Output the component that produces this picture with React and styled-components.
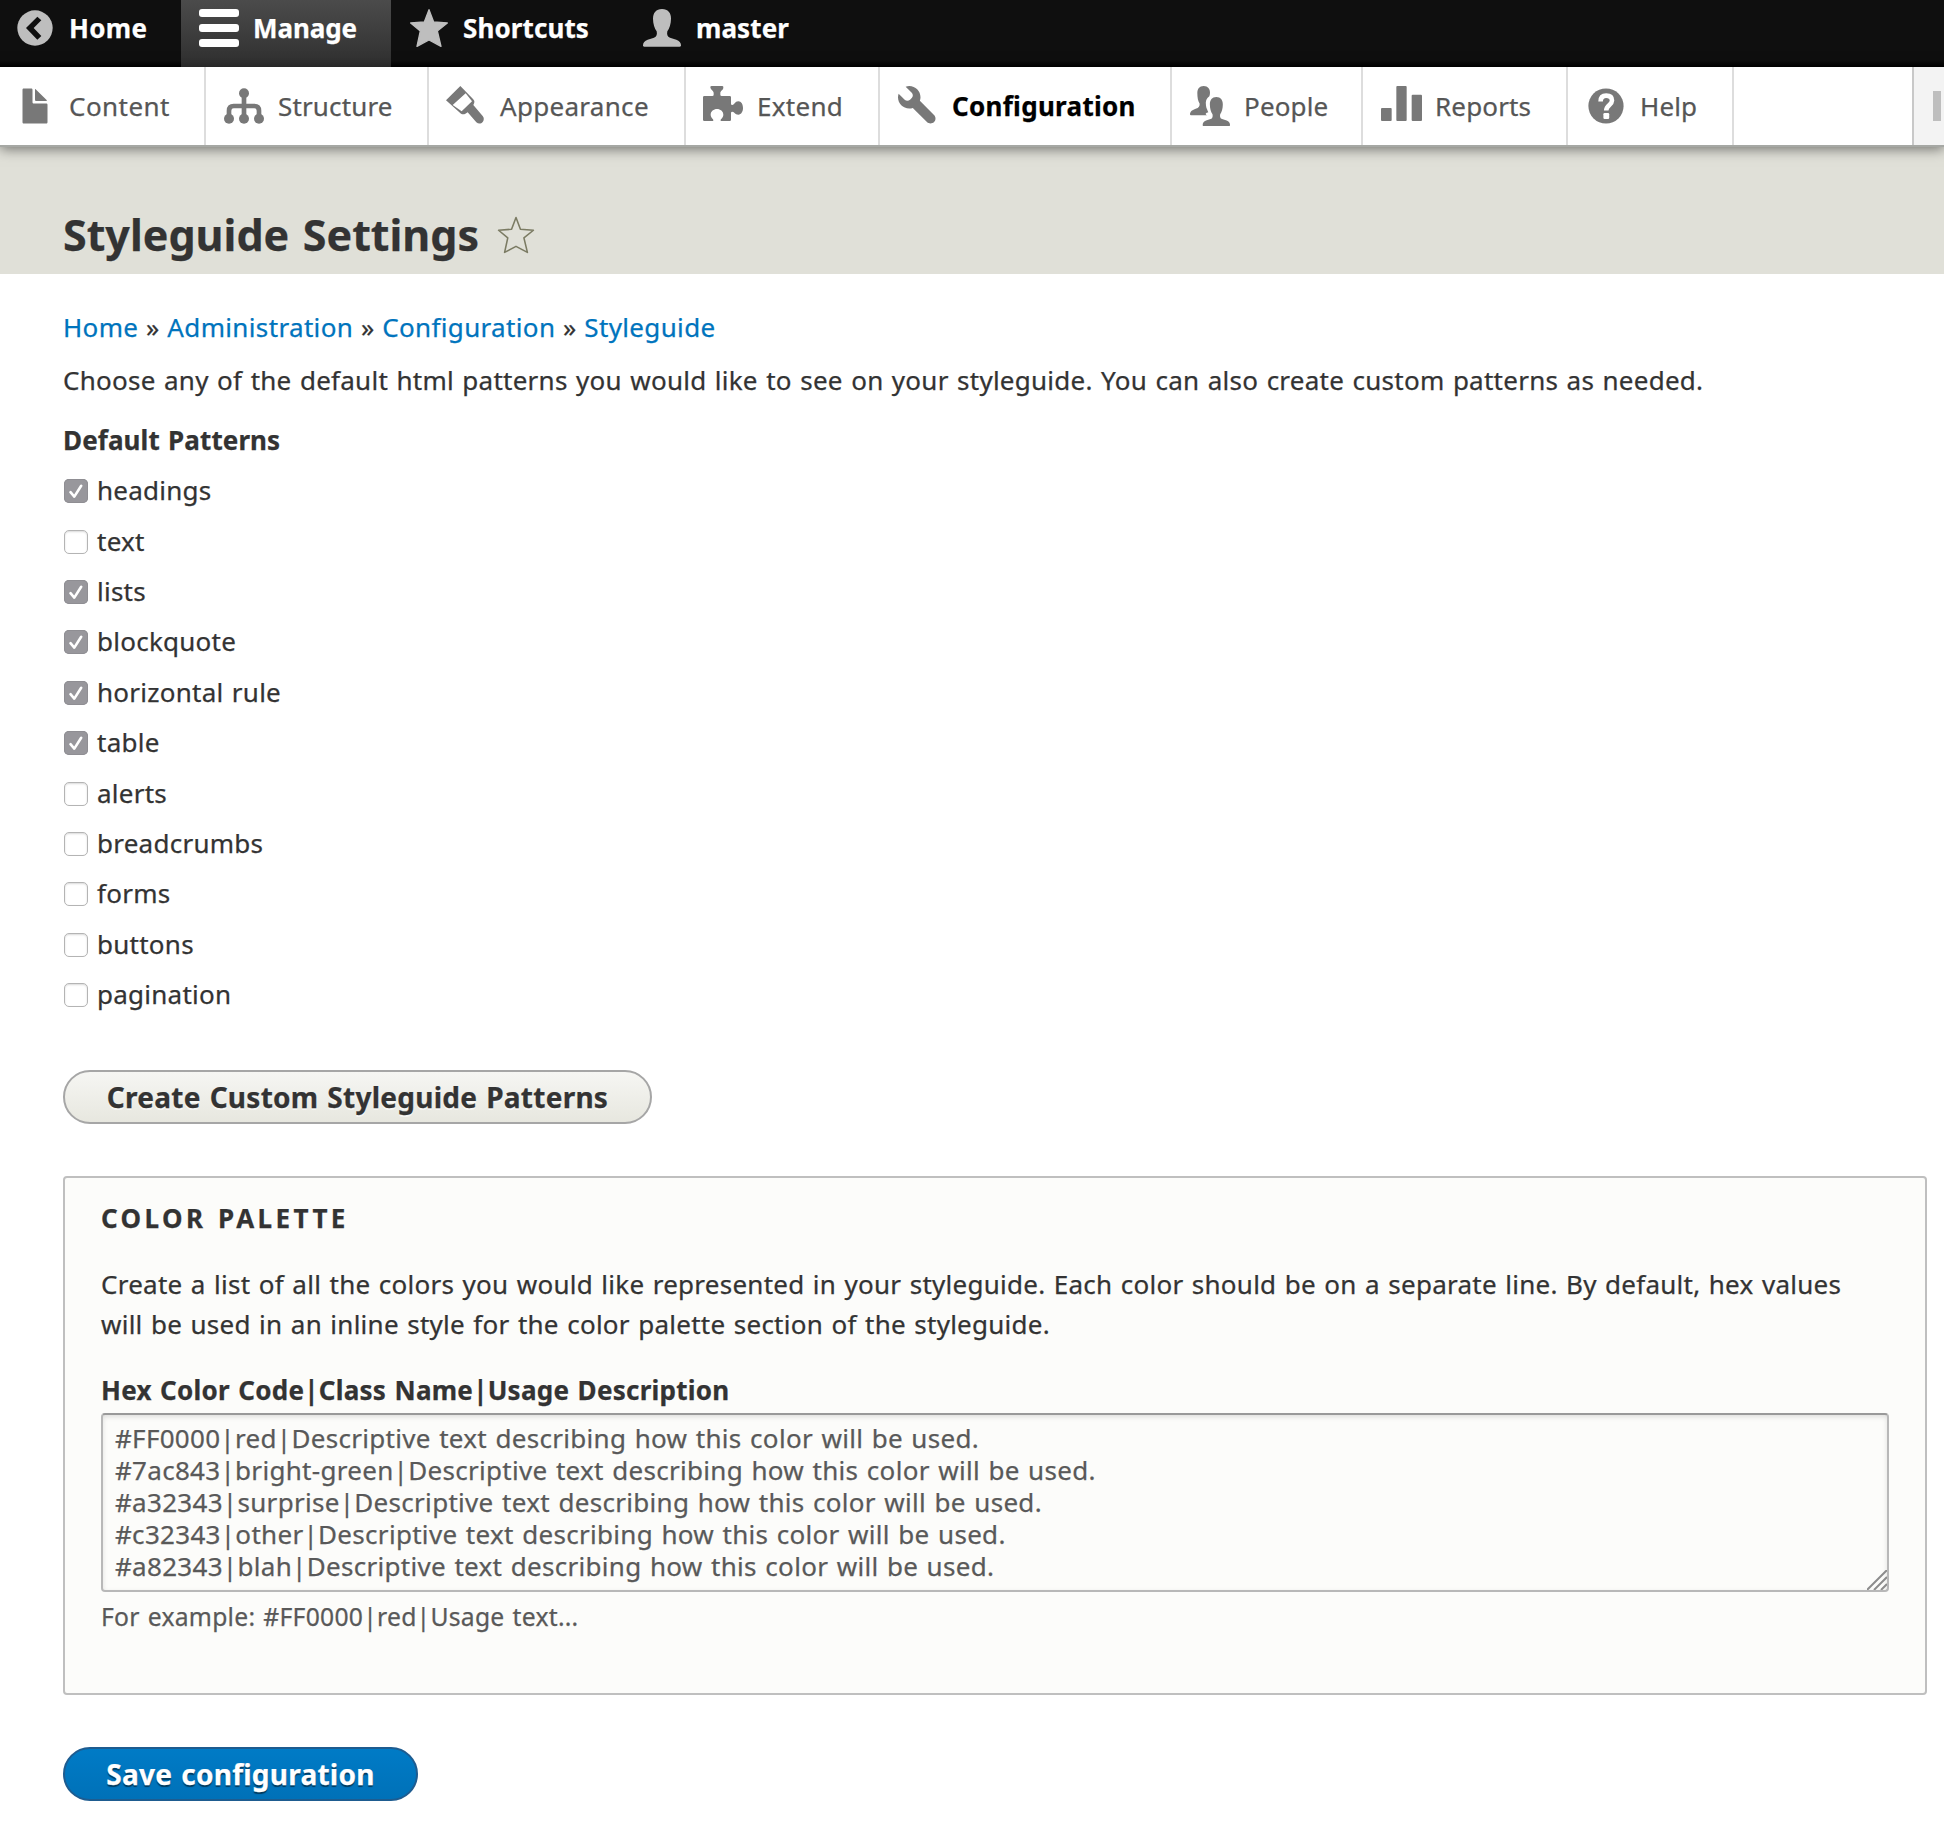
import React, { Component } from 'react';
import styled, { createGlobalStyle } from 'styled-components';

const GlobalStyle = createGlobalStyle`
  * {
    box-sizing: border-box;
  }

  body {
    margin: 0;
    background: #fff;
    color: #333;
    font-family: "Noto Sans", "Open Sans", sans-serif;
    font-size: 26px;
    line-height: 40px;
    letter-spacing: 0.25px;
    word-spacing: 1.4px;
    -webkit-text-stroke: 0.25px;
  }

  svg {
    -webkit-text-stroke: 0;
  }
`;

const Bar = styled.nav`
  display: flex;
  height: 67px;
  background: linear-gradient(#0f0f0f 60px, #000);
`;

const BarItem = styled.a`
  display: flex;
  align-items: center;
  width: ${props => props.width}px;
  padding: 0 0 12px ${props => props.inset || 18}px;
  background: ${props => props.active ? 'linear-gradient(#4b4b4b, #2f2f2f)' : 'none'};
  color: #fff;
  font-weight: bold;
  letter-spacing: ${props => props.spacing || 0.1}px;
  white-space: nowrap;
`;

const Icon = styled.svg`
  flex: none;
  width: 40px;
  height: 40px;
  margin-right: 14px;
  fill: ${props => props.color || '#787878'};
  overflow: visible;
`;

const Tray = styled.nav`
  display: flex;
  position: relative;
  height: 80px;
  background: #fff;
  border-bottom: 2px solid #a6a8a4;
  box-shadow: 0 2px 12px rgba(0, 0, 0, 0.5);
`;

const TrayItem = styled.a`
  display: flex;
  align-items: center;
  width: ${props => props.width}px;
  padding-left: ${props => props.inset || 18}px;
  border-right: 2px solid #ddd;
  color: ${props => props.active ? '#000' : '#565656'};
  font-weight: ${props => props.active ? 'bold' : 'normal'};
  letter-spacing: ${props => props.spacing || 0.15}px;
  white-space: nowrap;
`;

const TrayToggle = styled.button`
  display: flex;
  align-items: center;
  width: 32px;
  margin-left: auto;
  padding: 0 0 0 19px;
  border: 0;
  border-left: 2px solid #c8c8c8;
  background: #f3f3f3;
`;

const ToggleMark = styled.span`
  width: 8px;
  height: 30px;
  background: #bebebe;
`;

const Header = styled.header`
  display: flex;
  align-items: center;
  gap: 18px;
  height: 127px;
  padding: 48px 0 0 63px;
  background: #e0e0d8;
`;

const Title = styled.h1`
  margin: 0;
  font-size: 43px;
  line-height: 60px;
  letter-spacing: 0;
  word-spacing: 2.4px;
`;

const StarOutline = styled.svg`
  width: 38px;
  height: 38px;
  fill: none;
  stroke: #7b7b63;
`;

const Main = styled.main`
  padding: 33px 17px 0 63px;
`;

const Breadcrumb = styled.div`
  display: flex;
  gap: 7.7px;
  letter-spacing: 0.35px;
  white-space: nowrap;
`;

const Link = styled.a`
  color: #0074bd;
`;

const Intro = styled.p`
  margin: 13px 0 20px;
  white-space: nowrap;
`;

const Label = styled.div`
  font-weight: bold;
  letter-spacing: ${props => props.spacing || 0.25}px;
`;

const PatternList = styled.ul`
  margin: 5px 0 51px 1px;
  padding: 0;
  list-style: none;
`;

const Pattern = styled.li`
  display: flex;
  align-items: center;
  gap: 9px;
  height: 50.4px;
`;

const Checkbox = styled.span`
  display: flex;
  width: 24px;
  height: 24px;
  margin-top: 2px;
  border: ${props => props.checked ? '0' : '1px solid #b4b4b4'};
  border-radius: 5px;
  background: ${props => props.checked ? '#98979c' : '#fff'};
  box-shadow: ${props => props.checked ? 'inset 0 0 0 1px #8f8e93' : 'inset 0 1px 2px rgba(0, 0, 0, 0.15)'};
`;

const Button = styled.button`
  display: block;
  width: ${props => props.width}px;
  height: 54px;
  padding: 0;
  border: 2px solid ${props => props.primary ? '#1e5c90' : '#a6a6a6'};
  border-radius: 27px;
  background: ${props => props.primary ? 'linear-gradient(#007bc6, #0071b8)' : 'linear-gradient(#f6f6f3, #e7e7df)'};
  color: ${props => props.primary ? '#fff' : '#333'};
  font: bold 28px/48px "Noto Sans", sans-serif;
  letter-spacing: 0.25px;
  word-spacing: 1.5px;
  text-shadow: ${props => props.primary ? '0 2px 1px rgba(0, 0, 0, 0.5)' : '0 2px 0 rgba(255, 255, 255, 0.6)'};
`;

const Fieldset = styled.section`
  height: 519px;
  margin: 52px 0;
  padding: 20px 36px;
  border: 2px solid #bfbfbf;
  border-radius: 4px;
  background: #fcfcfa;
`;

const Legend = styled.div`
  font-weight: bold;
  letter-spacing: 3.4px;
  text-transform: uppercase;
`;

const Help = styled.p`
  margin: 26px 0;
  white-space: nowrap;
`;

const AreaWrap = styled.div`
  position: relative;
  height: 179px;
  margin-top: 3px;
`;

const Area = styled.textarea`
  display: block;
  width: 100%;
  height: 100%;
  padding: 7px 12px;
  border: 2px solid #b8b8b8;
  border-top-color: #999;
  border-radius: 4px;
  background: #fcfcfa;
  box-shadow: inset 0 2px 5px rgba(0, 0, 0, 0.12);
  color: #595959;
  font: 26px/32px "Noto Sans", sans-serif;
  letter-spacing: 0.3px;
  word-spacing: 1.4px;
  overflow: hidden;
  resize: none;
`;

const Grip = styled.svg`
  position: absolute;
  right: 2px;
  bottom: 2px;
  width: 20px;
  height: 20px;
  stroke: #8c8c8c;
  stroke-width: 2;
`;

const Description = styled.div`
  margin-top: 5px;
  color: #595959;
  font-size: 24.7px;
`;

const STAR = 'M57 2 71 39 112 42 82 66 93 112 57 93 21 112 31 66 2 42 43 39z';

const BackIcon = () => (
  <Icon viewBox="0 0 120 120" color="#bebebe">
    <circle cx="60" cy="60" r="53" />
    <path fill="#0f0f0f" d="M67 26 79 37 56 60 79 84 67 95 33 60z" />
  </Icon>
);

const MenuIcon = () => (
  <Icon viewBox="0 0 120 120" color="#fff">
    <rect y="3" width="120" height="24" rx="9" />
    <rect y="48" width="120" height="24" rx="9" />
    <rect y="93" width="120" height="24" rx="9" />
  </Icon>
);

const StarIcon = () => (
  <Icon viewBox="-3 0 120 120" color="#bebebe" stroke="#bebebe" strokeWidth="4" strokeLinejoin="round">
    <path transform="translate(0 3)" d={STAR} />
  </Icon>
);

const PERSON = 'M57 0C75 0 84 12 84 29c0 16-5 30-11 38-2 10 0 16 8 19l19 6c9 3 14 9 14 17 0 3-1 4-4 4H4c-3 0-4-1-4-4 0-8 5-14 14-17l19-6c8-3 10-9 8-19-6-8-11-22-11-38C30 12 39 0 57 0z';

const PersonIcon = () => (
  <Icon viewBox="-3 -3 120 120" color="#bebebe"><path d={PERSON} /></Icon>
);

const FileIcon = () => (
  <Icon viewBox="0 0 16 16">
    <path d="M12.502 7h-5c-.276 0-.502-.225-.502-.5v-5c0-.275-.225-.5-.5-.5h-3c-.275 0-.5.225-.5.5v13c0 .275.225.5.5.5h9c.275 0 .5-.225.5-.5v-7c0-.275-.223-.5-.498-.5zM8.502 6h4c.275 0 .34-.159.146-.354l-4.293-4.292c-.195-.195-.353-.129-.353.146v4c0 .275.225.5.5.5z" />
  </Icon>
);

const HierarchyIcon = () => (
  <Icon viewBox="0 0 120 120">
    <circle cx="60" cy="22" r="15" />
    <circle cx="15" cy="98" r="15" />
    <circle cx="60" cy="98" r="15" />
    <circle cx="105" cy="98" r="15" />
    <path fill="none" stroke="#787878" strokeWidth="14" d="M60 22V98M15 92V74Q15 60 29 60H91Q105 60 105 74V92" />
  </Icon>
);

const BrushIcon = () => (
  <Icon viewBox="0 0 120 120">
    <path fillRule="evenodd" d="M43 0 81 39C87 45 86 50 82 57L110 90C115 96 114 103 110 108 105 114 97 114 91 109L65 79C58 85 51 87 45 83L0 43zM59 22 20 57 47 76 78 46z" />
  </Icon>
);

const PuzzleIcon = () => (
  <Icon viewBox="0 0 120 120">
    <path d="M22 3Q22 0 26 0H58Q62 0 61 5C60 13 52 14 52 21V26Q52 30 56 30H80Q84 30 84 34V54Q84 57 88 57C95 57 95 46 106 46C115 46 120 56 120 66C120 76 115 86 106 86C95 86 95 77 88 77Q84 77 84 81V101Q84 105 80 105H54C49 100 61 97 61 86C61 76 52 69 42 69C32 69 23 76 23 86C23 97 35 100 30 105H4Q0 105 0 101V34Q0 30 4 30H28Q32 30 32 26V21C32 14 22 12 22 3z" />
  </Icon>
);

const WrenchIcon = () => (
  <Icon viewBox="0 0 16 16">
    <path d="M14.416 11.586l-.01-.008-5.656-5.656c.15-.449.252-.921.252-1.421 0-2.485-2.016-4.501-4.502-4.501-.505 0-.981.102-1.434.255l2.431 2.431c.588.588.588 1.547 0 2.135l-.686.687c-.59.587-1.549.587-2.137 0l-2.419-2.441c-.153.453-.255.932-.255 1.434 0 2.486 2.015 4.5 4.5 4.5.5 0 .972-.102 1.421-.25l5.656 5.654.008.01c.391.393.902.586 1.414.586.513 0 1.024-.193 1.415-.586.392-.391.585-.902.585-1.414 0-.51-.193-1.022-.583-1.414z" />
  </Icon>
);

const PeopleIcon = () => (
  <Icon viewBox="0 0 120 120">
    <path d="M41 0C54 0 60 9 60 20c0 4-1 8-2 11-9 6-12 15-10 28 1 8 5 14 7 20-6 2-12 4-4 9H3c-2 0-3-1-3-3 0-9 8-14 17-17 10-3 12-8 12-15-5-7-7-18-7-31C22 9 28 0 41 0z" />
    <path transform="translate(38 33) scale(.72 .77)" d={PERSON} />
  </Icon>
);

const ChartIcon = () => (
  <Icon viewBox="0 0 120 120">
    <rect y="66" width="32" height="39" rx="3" />
    <rect x="46" width="31" height="105" rx="3" />
    <rect x="92" y="26" width="31" height="79" rx="3" />
  </Icon>
);

const HelpIcon = () => (
  <Icon viewBox="0 0 40 40">
    <circle cx="20" cy="20" r="17.6" />
    <path fill="none" stroke="#fff" strokeWidth="4.6" d="M14.6 15.5C14.6 11.5 16.6 9.6 20.2 9.6C24 9.6 26 11.6 26 14.6C26 19 20.2 19 20.2 24.6" />
    <rect x="17.4" y="27" width="5.8" height="6" rx="1.2" fill="#fff" />
  </Icon>
);

const TRAY_ITEMS = [
  { title: 'Content', icon: FileIcon, width: 206, inset: 15, spacing: 0.45 },
  { title: 'Structure', icon: HierarchyIcon, width: 223 },
  { title: 'Appearance', icon: BrushIcon, width: 257, inset: 17, spacing: 0.3 },
  { title: 'Extend', icon: PuzzleIcon, width: 194, inset: 17, spacing: 0.3 },
  { title: 'Configuration', icon: WrenchIcon, width: 292, active: true, spacing: 0.3 },
  { title: 'People', icon: PeopleIcon, width: 191 },
  { title: 'Reports', icon: ChartIcon, width: 205 },
  { title: 'Help', icon: HelpIcon, width: 166 },
];

const PATTERNS = [
  { name: 'headings', checked: true },
  { name: 'text' },
  { name: 'lists', checked: true },
  { name: 'blockquote', checked: true },
  { name: 'horizontal rule', checked: true },
  { name: 'table', checked: true },
  { name: 'alerts' },
  { name: 'breadcrumbs' },
  { name: 'forms' },
  { name: 'buttons' },
  { name: 'pagination' },
];

const COLORS = `#FF0000|red|Descriptive text describing how this color will be used.
#7ac843|bright-green|Descriptive text describing how this color will be used.
#a32343|surprise|Descriptive text describing how this color will be used.
#c32343|other|Descriptive text describing how this color will be used.
#a82343|blah|Descriptive text describing how this color will be used.`;

export default class App extends Component {
  renderTrayItem = item => {
    const { title, icon: ItemIcon, ...rest } = item;
    return <TrayItem key={title} {...rest}><ItemIcon />{title}</TrayItem>;
  };

  renderPattern = ({ name, checked }) => (
    <Pattern key={name}>
      <Checkbox checked={checked}>
        {checked &&
          <svg width="24" height="24" fill="none" stroke="#fff" strokeWidth="2.6" strokeLinecap="round" strokeLinejoin="round">
            <path d="M6.5 13.2 10.3 17.6 17.2 6.8" />
          </svg>
        }
      </Checkbox>
      {name}
    </Pattern>
  );

  render() {
    return (
      <>
        <GlobalStyle />
        <Bar>
          <BarItem width={181} inset={15} spacing={0.3}><BackIcon />Home</BarItem>
          <BarItem width={210} active spacing={-0.1}><MenuIcon />Manage</BarItem>
          <BarItem width={233}><StarIcon />Shortcuts</BarItem>
          <BarItem width={220}><PersonIcon />master</BarItem>
        </Bar>
        <Tray>
          {TRAY_ITEMS.map(this.renderTrayItem)}
          <TrayToggle><ToggleMark /></TrayToggle>
        </Tray>
        <Header>
          <Title>Styleguide Settings</Title>
          <StarOutline viewBox="-3 -3 120 120" strokeWidth="5" strokeLinejoin="round"><path d={STAR} /></StarOutline>
        </Header>
        <Main>
          <Breadcrumb>
            <Link>Home</Link><span>»</span>
            <Link>Administration</Link><span>»</span>
            <Link>Configuration</Link><span>»</span>
            <Link>Styleguide</Link>
          </Breadcrumb>
          <Intro>Choose any of the default html patterns you would like to see on your styleguide. You can also create custom patterns as needed.</Intro>
          <Label spacing={0.1}>Default Patterns</Label>
          <PatternList>{PATTERNS.map(this.renderPattern)}</PatternList>
          <Button width={589}>Create Custom Styleguide Patterns</Button>
          <Fieldset>
            <Legend>Color Palette</Legend>
            <Help>
              Create a list of all the colors you would like represented in your styleguide. Each color should be on a separate line. By default, hex values
              <br />
              will be used in an inline style for the color palette section of the styleguide.
            </Help>
            <Label>Hex Color Code|Class Name|Usage Description</Label>
            <AreaWrap>
              <Area defaultValue={COLORS} spellCheck={false} />
              <Grip viewBox="0 0 20 20"><path d="M0 20 20 0M7 20 20 7M14 20 20 14" /></Grip>
            </AreaWrap>
            <Description>For example: #FF0000|red|Usage text...</Description>
          </Fieldset>
          <Button width={355} primary>Save configuration</Button>
        </Main>
      </>
    );
  }
}
